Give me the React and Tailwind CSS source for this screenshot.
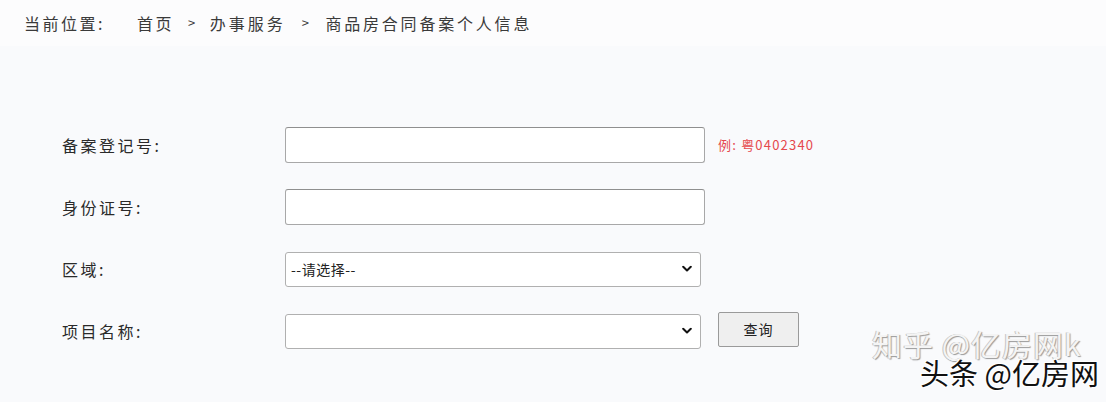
import React from "react";

const font = { fontFamily: '"Noto Sans CJK SC", "Noto Sans", sans-serif' };

function Chevron() {
  return (
    <svg width="10" height="7" viewBox="0 0 10 7" className="absolute right-[8px] top-1/2 -translate-y-1/2 pointer-events-none">
      <path d="M1.2 1.2 L5 5 L8.8 1.2" fill="none" stroke="#111" strokeWidth="2" strokeLinecap="round" strokeLinejoin="round" />
    </svg>
  );
}

function Row({ label, children }) {
  return (
    <div className="flex items-center h-[36px]">
      <div className="w-[223px] text-[16px] tracking-[2.5px] text-[#2a2a2a]">{label}</div>
      {children}
    </div>
  );
}

export default function App() {
  return (
    <div className="relative w-[1106px] h-[402px] bg-[#f9fafc] overflow-hidden" style={font}>
      <div className="h-[46px] bg-[#fcfcfd] flex items-center pl-[24px] text-[16px] tracking-[2.5px] text-[#3a3a3a]">
        <span>当前位置:</span>
        <span className="ml-[32px]">首页</span>
        <span className="ml-[14px] mr-[12px] text-[13px]">&gt;</span>
        <span className="tracking-[3px]">办事服务</span>
        <span className="ml-[16px] mr-[14px] text-[13px]">&gt;</span>
        <span className="tracking-[2.8px]">商品房合同备案个人信息</span>
      </div>
      <div className="pt-[81px] pl-[62px] flex flex-col gap-[26px]">
        <Row label="备案登记号:">
          <input className="w-[420px] h-[36px] bg-white border border-[#a8a8a8] border-t-[#8f8f8f] rounded-[3px] outline-none" />
          <span className="ml-[13px] text-[13px] text-[#e5484d] tracking-[1.2px]">例: 粤0402340</span>
        </Row>
        <Row label="身份证号:">
          <input className="w-[420px] h-[36px] bg-white border border-[#a8a8a8] border-t-[#8f8f8f] rounded-[3px] outline-none" />
        </Row>
        <Row label="区域:">
          <div className="relative w-[416px] h-[35px] bg-white border border-[#b0b0b0] rounded-[3px] flex items-center pl-[5px] text-[14px] text-[#222] tracking-[0.5px]">
            --请选择--
            <Chevron />
          </div>
        </Row>
        <Row label="项目名称:">
          <div className="relative w-[416px] h-[35px] bg-white border border-[#b0b0b0] rounded-[3px]">
            <Chevron />
          </div>
          <button className="ml-[17px] -mt-[4px] w-[81px] h-[35px] bg-[#efefef] border border-[#9a9a9a] rounded-[2px] text-[14px] text-[#222] tracking-[1px]">
            查询
          </button>
        </Row>
      </div>
      <div
        className="absolute left-[872px] top-[328px] text-[30px] leading-none text-[#f4f4f4] tracking-[1px]"
        style={{ textShadow: "1px 1px 1px #999, -1px 0 0 #c4c4c4" }}
      >
        知乎 @亿房网k
      </div>
      <div
        className="absolute left-[920px] top-[358px] text-[29px] leading-none text-[#111]"
        style={{ textShadow: "1px 1px 0 #fff, -1px -1px 0 #fff, 1px -1px 0 #fff, -1px 1px 0 #fff" }}
      >
        头条 @亿房网
      </div>
    </div>
  );
}
